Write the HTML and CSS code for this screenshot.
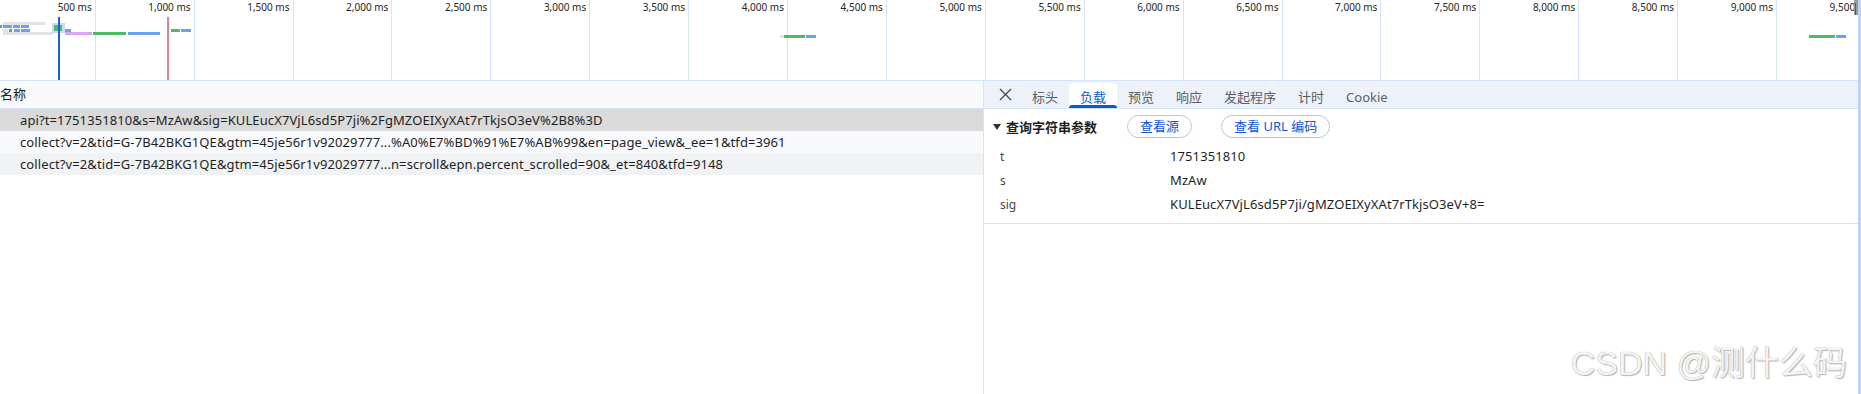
FILE: index.html
```html
<!DOCTYPE html>
<html lang="zh-CN">
<head>
<meta charset="utf-8">
<title>Network</title>
<link rel="stylesheet" href="styles.css">
</head>
<body>
<div class="page">
  <div class="overview">
    <div class="grid-line" style="left:94.7px"><span class="tick">500 ms</span></div>
    <div class="grid-line" style="left:193.6px"><span class="tick">1,000 ms</span></div>
    <div class="grid-line" style="left:292.5px"><span class="tick">1,500 ms</span></div>
    <div class="grid-line" style="left:391.4px"><span class="tick">2,000 ms</span></div>
    <div class="grid-line" style="left:490.3px"><span class="tick">2,500 ms</span></div>
    <div class="grid-line" style="left:589.2px"><span class="tick">3,000 ms</span></div>
    <div class="grid-line" style="left:688.1px"><span class="tick">3,500 ms</span></div>
    <div class="grid-line" style="left:787px"><span class="tick">4,000 ms</span></div>
    <div class="grid-line" style="left:885.9px"><span class="tick">4,500 ms</span></div>
    <div class="grid-line" style="left:984.8px"><span class="tick">5,000 ms</span></div>
    <div class="grid-line" style="left:1083.7px"><span class="tick">5,500 ms</span></div>
    <div class="grid-line" style="left:1182.6px"><span class="tick">6,000 ms</span></div>
    <div class="grid-line" style="left:1281.5px"><span class="tick">6,500 ms</span></div>
    <div class="grid-line" style="left:1380.4px"><span class="tick">7,000 ms</span></div>
    <div class="grid-line" style="left:1479.3px"><span class="tick">7,500 ms</span></div>
    <div class="grid-line" style="left:1578.2px"><span class="tick">8,000 ms</span></div>
    <div class="grid-line" style="left:1677.1px"><span class="tick">8,500 ms</span></div>
    <div class="grid-line" style="left:1776px"><span class="tick">9,000 ms</span></div>
    <div class="grid-line" style="left:1874.9px"><span class="tick">9,500 ms</span></div>

    <div class="bar idle" style="left:3px;width:42px;top:22px"></div>
    <div class="bar green" style="left:0;width:2px;top:25px"></div>
    <div class="bar blue" style="left:3px;width:9px;top:25px"></div>
    <div class="bar blue" style="left:13px;width:7px;top:25px"></div>
    <div class="bar blue" style="left:21px;width:8px;top:25px"></div>
    <div class="bar idle" style="left:3px;width:5px;top:29px"></div>
    <div class="bar green" style="left:9px;width:3px;top:29px"></div>
    <div class="bar blue" style="left:14px;width:6px;top:29px"></div>
    <div class="bar blue" style="left:21px;width:9px;top:29px"></div>
    <div class="bar idle" style="left:3px;width:50px;top:32px"></div>
    <div class="hl-box" style="left:52px;width:13px;top:23px;height:10px"></div>
    <div class="bar green" style="left:54px;width:8px;top:25px;height:6px"></div>
    <div class="bar blue" style="left:65px;width:6px;top:29px"></div>
    <div class="bar purple" style="left:65px;width:27px;top:32px"></div>
    <div class="bar green" style="left:93px;width:33px;top:32px"></div>
    <div class="bar blue" style="left:128px;width:32px;top:32px"></div>
    <div class="bar green" style="left:171px;width:9px;top:29px"></div>
    <div class="bar blue" style="left:181px;width:10px;top:29px"></div>
    <div class="bar idle" style="left:780px;width:4px;top:35px"></div>
    <div class="bar green" style="left:784px;width:21px;top:35px"></div>
    <div class="bar blue" style="left:806px;width:10px;top:35px"></div>
    <div class="bar green" style="left:1809px;width:26px;top:35px"></div>
    <div class="bar blue" style="left:1836px;width:10px;top:35px"></div>

    <div class="marker dcl" style="left:58px"></div>
    <div class="marker load" style="left:167px"></div>
    <div class="thumb"></div>
    <div class="thumb-mark"></div>
  </div>

  <div class="main">
    <div class="list">
      <div class="list-head">名称</div>
      <div class="row selected">api?t=1751351810&amp;s=MzAw&amp;sig=KULEucX7VjL6sd5P7ji%2FgMZOEIXyXAt7rTkjsO3eV%2B8%3D</div>
      <div class="row odd">collect?v=2&amp;tid=G-7B42BKG1QE&amp;gtm=45je56r1v92029777...%A0%E7%BD%91%E7%AB%99&amp;en=page_view&amp;_ee=1&amp;tfd=3961</div>
      <div class="row even">collect?v=2&amp;tid=G-7B42BKG1QE&amp;gtm=45je56r1v92029777...n=scroll&amp;epn.percent_scrolled=90&amp;_et=840&amp;tfd=9148</div>
    </div>
    <div class="detail">
      <div class="tabs">
        <span class="close">
          <svg width="13" height="13" viewBox="0 0 13 13"><path d="M1 1L12 12M12 1L1 12" stroke="#474747" stroke-width="1.3" fill="none"/></svg>
        </span>
        <span class="tab">标头</span>
        <span class="tab active">负载</span>
        <span class="tab">预览</span>
        <span class="tab">响应</span>
        <span class="tab">发起程序</span>
        <span class="tab">计时</span>
        <span class="tab">Cookie</span>
      </div>
      <div class="payload">
        <div class="section-head">
          <span class="tri"></span>
          <span class="section-title">查询字符串参数</span>
          <span class="pill first">查看源</span>
          <span class="pill">查看 URL 编码</span>
        </div>
        <div class="params">
          <div class="param"><span class="key">t</span><span class="val">1751351810</span></div>
          <div class="param"><span class="key">s</span><span class="val">MzAw</span></div>
          <div class="param"><span class="key">sig</span><span class="val">KULEucX7VjL6sd5P7ji/gMZOEIXyXAt7rTkjsO3eV+8=</span></div>
        </div>
      </div>
    </div>
  </div>
  <div class="watermark">CSDN @测什么码</div>
  <div class="edge"></div>
</div>
</body>
</html>
```

FILE: styles.css
```css
* { box-sizing: border-box; }
html, body { margin: 0; padding: 0; background: #fff; }
body {
  font-family: "Noto Sans", "Noto Sans CJK SC", sans-serif;
  font-size: 13px;
  color: #1f1f1f;
}
.page {
  position: relative;
  width: 1861px;
  height: 394px;
  overflow: hidden;
}

/* overview */
.overview {
  position: relative;
  height: 81px;
  border-bottom: 1px solid #d3e3fd;
  overflow: hidden;
}
.grid-line {
  position: absolute;
  top: 0;
  width: 1px;
  height: 80px;
  background: #d3e3fd;
}
.tick {
  position: absolute;
  right: 4px;
  top: 0;
  font-size: 10px;
  line-height: 14px;
  white-space: nowrap;
  color: #262626;
}
.bar {
  position: absolute;
  height: 3px;
}
.bar.idle { background: #e3e3e3; }
.bar.green { background: #4cbb64; }
.bar.blue { background: #6e9ff2; }
.bar.purple { background: #d8a5f3; }
.hl-box {
  position: absolute;
  background: #c9dcf6;
}
.marker {
  position: absolute;
  top: 17px;
  height: 63px;
}
.marker.dcl { width: 2px; background: #1a5fd6; }
.marker.load { width: 2px; background: #d98585; }
.thumb {
  position: absolute;
  left: 1854px;
  top: 0;
  width: 4px;
  height: 15px;
  background: #9a9a9a;
}
.thumb-mark {
  position: absolute;
  left: 1855px;
  top: 3px;
  width: 1px;
  height: 12px;
  background: #1a5fd6;
}
.edge {
  position: absolute;
  right: 0;
  top: 0;
  width: 3px;
  height: 394px;
  background: #bdd3f5;
}

/* main */
.main {
  display: flex;
  height: 313px;
}
.list {
  width: 984px;
  border-right: 1px solid #d3e3fd;
  flex: none;
}
.list-head {
  height: 28px;
  border-bottom: 1px solid #d3e3fd;
  background: #f8f9fb;
  line-height: 26px;
  padding-left: 0;
}
.row {
  height: 22px;
  line-height: 22px;
  padding-left: 20px;
  white-space: nowrap;
  overflow: hidden;
  letter-spacing: 0.1px;
}
.row.selected { background: #dadada; }
.row.odd { background: #f8f9fd; }
.row.even { background: #f1f2f4; }

.detail {
  flex: 1;
  display: flex;
  flex-direction: column;
}
.tabs {
  height: 28px;
  background: #edf2fa;
  border-bottom: 1px solid #d3e3fd;
  display: flex;
  align-items: flex-end;
}
.close {
  width: 13px;
  height: 13px;
  margin-left: 15px;
  margin-right: 9px;
  align-self: center;
  display: flex;
}
.tab {
  position: relative;
  height: 25px;
  padding: 6px 11px 0;
  line-height: 17px;
  color: #5b5e63;
  white-space: nowrap;
}
.tab.active {
  background: #fff;
  color: #0b57d0;
  border-radius: 4px 4px 0 0;
}
.tab.active::after {
  content: "";
  position: absolute;
  left: 0;
  right: 0;
  bottom: 0;
  height: 3px;
  background: #0b57d0;
  border-radius: 3px 3px 0 0;
}

.payload {
  flex: 1;
}
.section-head {
  height: 35px;
  display: flex;
  align-items: center;
  padding-left: 9px;
}
.tri {
  width: 0;
  height: 0;
  border-left: 4.5px solid transparent;
  border-right: 4.5px solid transparent;
  border-top: 6px solid #303030;
  margin-right: 5px;
}
.section-title {
  font-weight: 700;
  color: #1f1f1f;
}
.pill {
  height: 23px;
  line-height: 21px;
  padding: 0 12px;
  border: 1px solid #a8c7fa;
  border-radius: 12px;
  color: #0b57d0;
  margin-left: 29px;
  white-space: nowrap;
}
.pill.first { margin-left: 30px; }
.params {
  padding-bottom: 7px;
  border-bottom: 1px solid #d3e3fd;
}
.param {
  height: 24px;
  display: flex;
  align-items: center;
  padding-left: 16px;
}
.key {
  width: 170px;
  font-size: 12px;
  color: #474747;
}
.val {
  color: #1f1f1f;
  white-space: nowrap;
  letter-spacing: 0.1px;
}

.watermark {
  position: absolute;
  right: 14px;
  top: 343px;
  font-family: "Liberation Sans", "Noto Sans CJK SC", sans-serif;
  font-size: 34px;
  line-height: 40px;
  color: #f4f4f4;
  text-shadow: 0 0 1px #9a9a9a, 1px 1px 1px #b8b8b8;
  white-space: nowrap;
}
```
